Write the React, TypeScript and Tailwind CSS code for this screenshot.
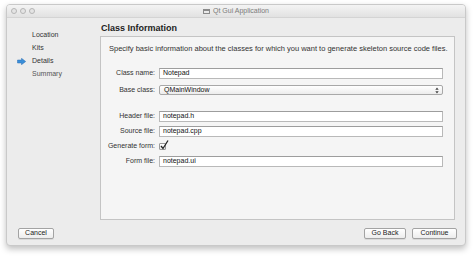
import React from 'react';

const font = { fontFamily: '"Liberation Sans", "DejaVu Sans", sans-serif' };

const Field: React.FC<{ label: string; value: string; className?: string }> = ({ label, value, className }) => (
  <div className={`flex items-center h-[11px] ${className || ''}`}>
    <div className="w-[58px] text-right pr-[4px] text-[7px] text-[#333] whitespace-nowrap">{label}</div>
    <div className="w-[284px] h-[11px] bg-white border border-[#b9b9b9] border-t-[#9d9d9d] flex items-center pl-[3px] text-[7px] text-[#111]">
      {value}
    </div>
  </div>
);

const Button: React.FC<{ label: string; w: string }> = ({ label, w }) => (
  <div
    className={`${w} h-[11px] rounded-[2px] border border-[#a3a3a3] bg-gradient-to-b from-white to-[#ededed] flex items-center justify-center text-[7px] text-[#222] shadow-[0_1px_0_rgba(0,0,0,0.08)]`}
  >
    {label}
  </div>
);

export default function App() {
  return (
    <div className="w-[474px] h-[256px] bg-white pt-[4px] pl-[6px] overflow-hidden" style={font}>
      <div className="w-[460px] h-[242px] rounded-[4px] bg-[#ececec] border border-[#c9c9c9] shadow-[0_3px_6px_rgba(0,0,0,0.25)] flex flex-col overflow-hidden">
        {/* title bar */}
        <div className="h-[13px] shrink-0 bg-gradient-to-b from-[#f4f4f4] to-[#e2e2e2] border-b border-[#d4d4d4] flex items-center relative">
          <div className="flex gap-[3px] pl-[4px]">
            <div className="w-[6px] h-[6px] rounded-full border border-[#b5b5b5] bg-[#e4e4e4]" />
            <div className="w-[6px] h-[6px] rounded-full border border-[#b5b5b5] bg-[#e4e4e4]" />
            <div className="w-[6px] h-[6px] rounded-full border border-[#b5b5b5] bg-[#e4e4e4]" />
          </div>
          <div className="absolute left-0 right-0 top-0 h-full flex items-center justify-center gap-[3px] text-[7px] text-[#7a7a7a]">
            <div className="w-[7px] h-[5px] border border-[#8a8a8a] border-t-2" />
            <span>Qt Gui Application</span>
          </div>
        </div>
        {/* body */}
        <div className="flex flex-1">
          <div className="w-[93px] shrink-0 pt-[11px] flex flex-col text-[7px] text-[#333]">
            <div className="h-[13px] flex items-center pl-[25px]">Location</div>
            <div className="h-[13px] flex items-center pl-[25px]">Kits</div>
            <div className="h-[13px] flex items-center pl-[10px]">
              <svg width="9" height="7" viewBox="0 0 9 7" className="mr-[6px]">
                <path d="M0.5 2 H4.5 V0.3 L8.7 3.5 L4.5 6.7 V5 H0.5 Z" fill="#3b8fd9" stroke="#2a6fb4" strokeWidth="0.5" />
              </svg>
              Details
            </div>
            <div className="h-[13px] flex items-center pl-[25px] text-[#555]">Summary</div>
          </div>
          <div className="flex flex-col flex-1">
            <div className="h-[17px] flex items-end pl-[1px] text-[9px] font-bold text-[#222]">Class Information</div>
            <div className="mt-[1px] w-[355px] h-[184px] bg-[#f5f5f5] border border-[#c4c4c4] flex flex-col">
              <div className="pl-[8px] pt-[7px] text-[7.5px] leading-[9px] text-[#333] whitespace-nowrap">
                Specify basic information about the classes for which you want to generate skeleton source code files.
              </div>
              <Field label="Class name:" value="Notepad" className="mt-[15px]" />
              <div className="flex items-center h-[10px] mt-[6px]">
                <div className="w-[58px] text-right pr-[4px] text-[7px] text-[#333]">Base class:</div>
                <div className="w-[284px] h-[10px] rounded-[2px] border border-[#a8a8a8] bg-gradient-to-b from-white to-[#ececec] flex items-center justify-between pl-[4px] pr-[3px] text-[7px] text-[#111]">
                  <span>QMainWindow</span>
                  <svg width="4" height="7" viewBox="0 0 4 7">
                    <path d="M0.3 2.8 L2 0.6 L3.7 2.8 Z M0.3 4.2 L2 6.4 L3.7 4.2 Z" fill="#444" />
                  </svg>
                </div>
              </div>
              <Field label="Header file:" value="notepad.h" className="mt-[16px]" />
              <Field label="Source file:" value="notepad.cpp" className="mt-[4px]" />
              <div className="flex items-center h-[12px] mt-[3px]">
                <div className="w-[58px] text-right pr-[4px] text-[7px] text-[#333] whitespace-nowrap">Generate form:</div>
                <div className="relative w-[7px] h-[7px] border border-[#9a9a9a] bg-gradient-to-b from-white to-[#e5e5e5] rounded-[1px]">
                  <svg width="9" height="10" viewBox="0 0 9 10" className="absolute left-[0px] top-[-4px]">
                    <path d="M1 6 L3 8.5 L8 0.5" fill="none" stroke="#222" strokeWidth="1.3" />
                  </svg>
                </div>
              </div>
              <Field label="Form file:" value="notepad.ui" className="mt-[4px]" />
            </div>
          </div>
        </div>
        {/* footer */}
        <div className="h-[27px] shrink-0 flex items-start pt-[8px] pl-[11px] pr-[8px]">
          <Button label="Cancel" w="w-[36px]" />
          <div className="flex-1" />
          <Button label="Go Back" w="w-[42px]" />
          <div className="w-[6px]" />
          <Button label="Continue" w="w-[45px]" />
        </div>
      </div>
    </div>
  );
}
